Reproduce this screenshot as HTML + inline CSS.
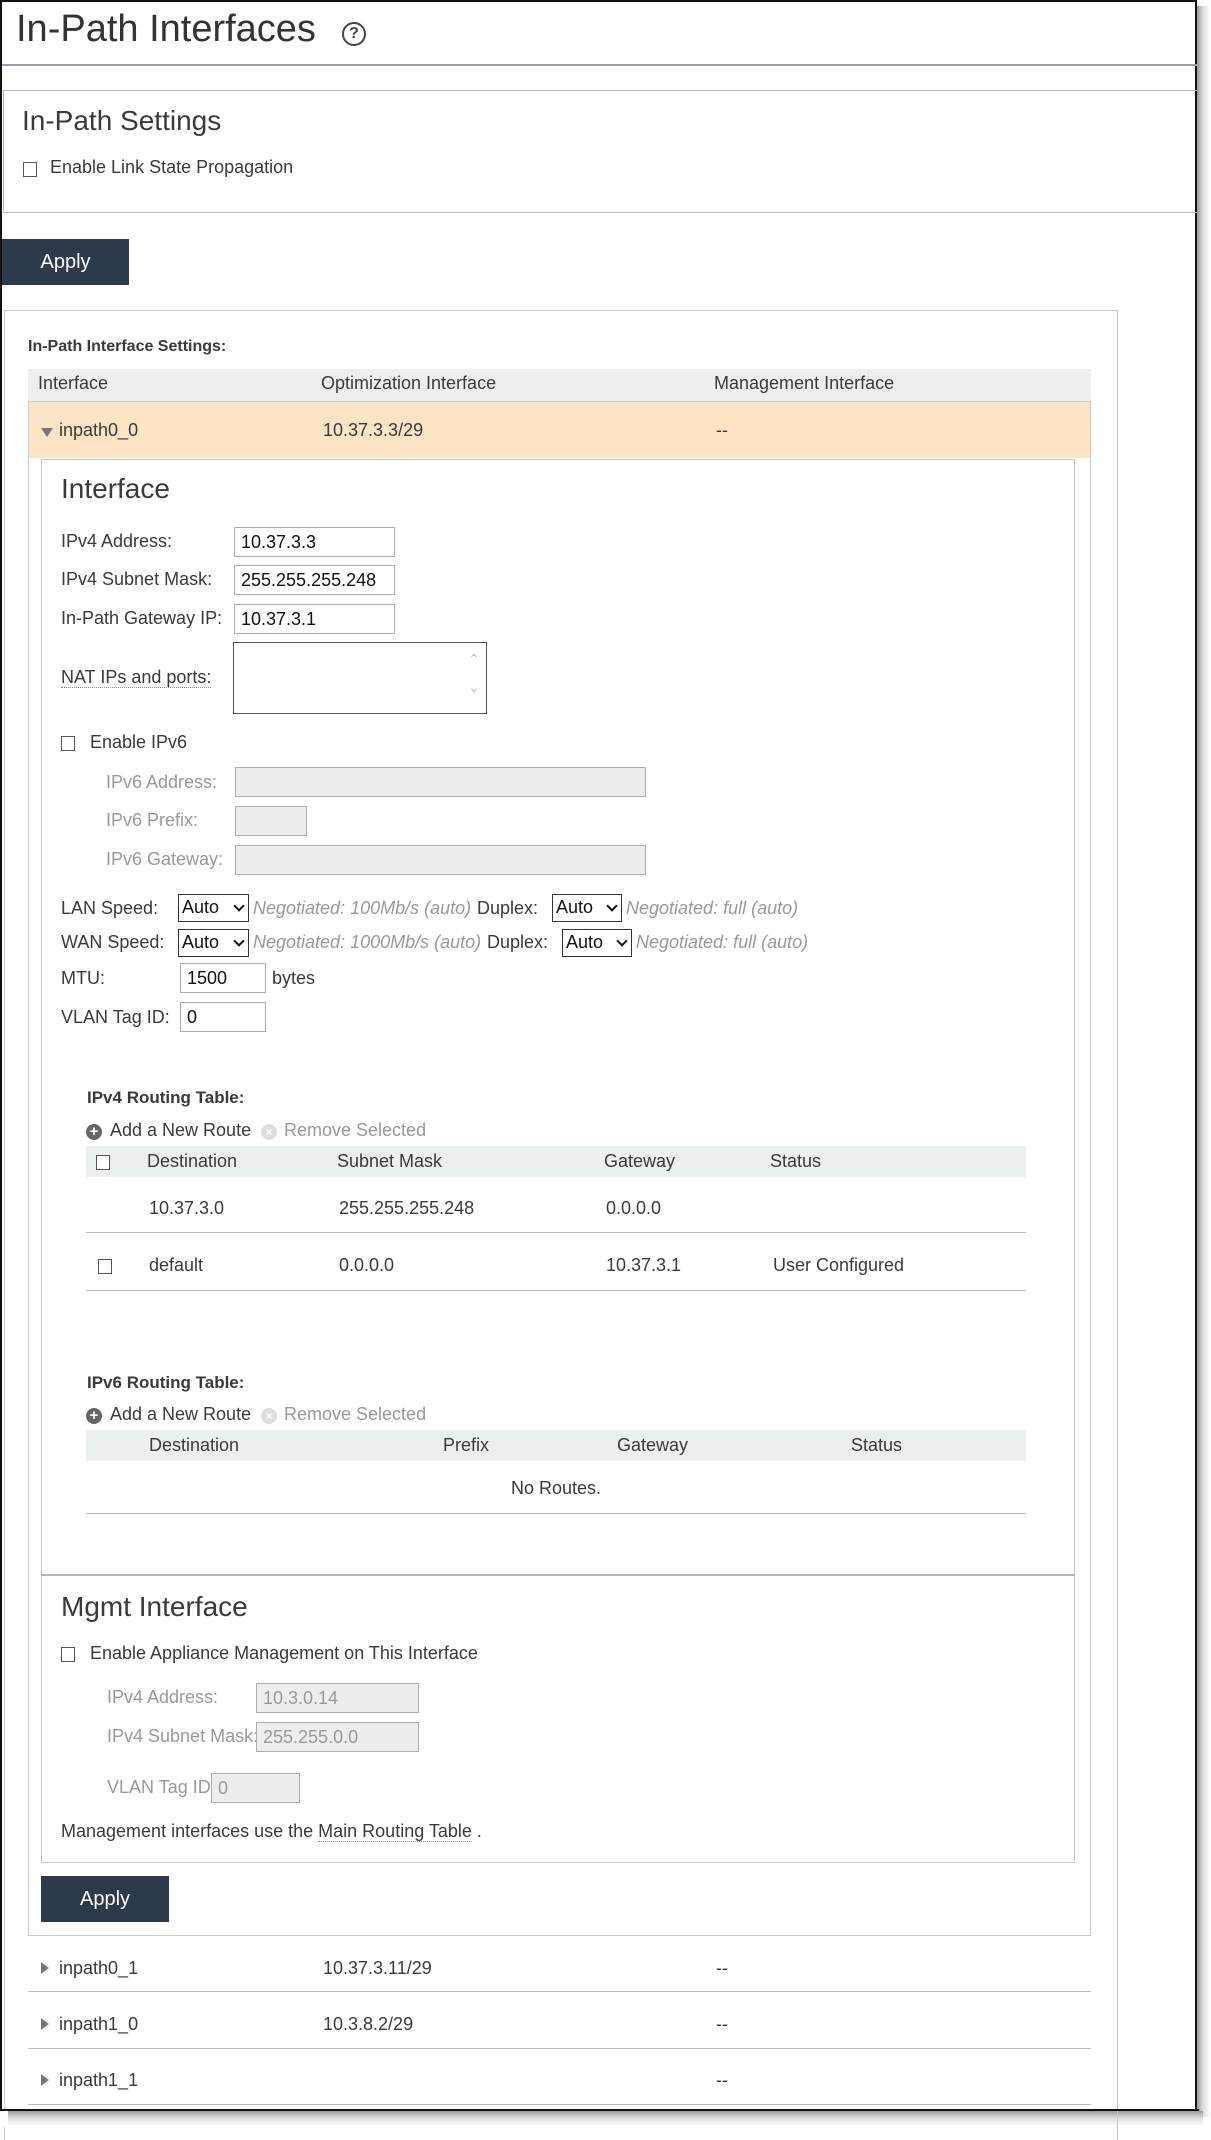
<!DOCTYPE html>
<html><head><meta charset="utf-8"><style>
*{margin:0;padding:0;box-sizing:border-box}
body{width:1211px;height:2127px;background:#fff;position:relative;font-family:"Liberation Sans",sans-serif;color:#3a3a3a;font-size:18px;overflow:hidden}
.a{position:absolute;white-space:nowrap;margin-top:-1px}
.l{position:absolute;background:#b5bcc2}
.inp{position:absolute;border:1px solid #a9aeb3;background:#fff;font-size:18px;padding-left:6px;line-height:28px;color:#111}
.dis{background:#eceeee;color:#999}
.btn{position:absolute;background:#2c3a4b;color:#fff;font-size:20px;text-align:center}
.cb{position:absolute;width:14px;height:15px;border:1.5px solid #555;background:#fff}
.sel{position:absolute;border:1.5px solid #333;height:28px;font-size:18px;line-height:24px;padding-left:3px;color:#111}
.sel:after{content:"";position:absolute;right:5px;top:7px;width:6px;height:6px;border-right:2px solid #111;border-bottom:2px solid #111;transform:rotate(45deg)}
.neg{color:#999;font-style:italic}
.g{color:#999}
.b{font-weight:bold}
.tri{position:absolute;width:0;height:0}
</style></head><body>
<div style="position:absolute;left:0;top:0;width:1197px;height:2111px;border:2px solid #111"></div>
<div style="position:absolute;left:1197px;top:6px;width:12px;height:2111px;background:linear-gradient(90deg,#999,#ddd,#f6f6f6)"></div>
<div style="position:absolute;left:8px;top:2111px;width:1195px;height:14px;background:linear-gradient(180deg,#999,#ddd,#fafafa)"></div>

<div class="a" style="left:16px;top:9px;font-size:38px;color:#333">In-Path Interfaces</div>
<div class="a" style="left:342px;top:22px;width:24px;height:24px;border:2.5px solid #444;border-radius:50%;font-size:16px;text-align:center;line-height:19px;font-weight:bold;color:#444;margin-top:0">?</div>
<div class="l" style="left:2px;top:64px;width:1195px;height:2px;background:#9aa1a8"></div>
<div class="l" style="left:2px;top:90px;width:1195px;height:1px"></div>
<div class="l" style="left:3px;top:91px;width:1px;height:122px"></div>
<div class="a" style="left:22px;top:106px;font-size:28px">In-Path Settings</div>
<div class="cb" style="left:23px;top:162px"></div>
<div class="a" style="left:50px;top:158px">Enable Link State Propagation</div>
<div class="l" style="left:3px;top:212px;width:1194px;height:1px"></div>
<div class="btn" style="left:2px;top:239px;width:127px;height:46px;line-height:46px">Apply</div>

<div style="position:absolute;left:4px;top:310px;width:1114px;height:1830px;border:1px solid #c2c7cc;border-bottom:none"></div>
<div class="a b" style="left:28px;top:339px;font-size:16px">In-Path Interface Settings:</div>
<div style="position:absolute;left:28px;top:369px;width:1063px;height:33px;background:#eceff0;border-bottom:1px solid #c8cdd1"></div>
<div class="a" style="left:38px;top:374px">Interface</div>
<div class="a" style="left:321px;top:374px">Optimization Interface</div>
<div class="a" style="left:714px;top:374px">Management Interface</div>
<div style="position:absolute;left:28px;top:402px;width:1063px;height:56px;background:#fde4c4;border-left:1px solid #c8cdd1;border-right:1px solid #c8cdd1"></div>
<div class="tri" style="left:41px;top:428px;border-left:6px solid transparent;border-right:6px solid transparent;border-top:9px solid #777"></div>
<div class="a" style="left:59px;top:421px">inpath0_0</div>
<div class="a" style="left:323px;top:421px">10.37.3.3/29</div>
<div class="a" style="left:716px;top:421px">--</div>
<div style="position:absolute;left:28px;top:458px;width:1063px;height:1478px;border:1px solid #c8cdd1;border-top:none"></div>
<div style="position:absolute;left:41px;top:459px;width:1034px;height:1404px;border:1px solid #c2c7cc"></div>

<div class="a" style="left:61px;top:474px;font-size:28px">Interface</div>
<div class="a" style="left:61px;top:532px">IPv4 Address:</div>
<div class="inp" style="left:234px;top:527px;width:161px;height:30px">10.37.3.3</div>
<div class="a" style="left:61px;top:570px">IPv4 Subnet Mask:</div>
<div class="inp" style="left:234px;top:565px;width:161px;height:30px">255.255.255.248</div>
<div class="a" style="left:61px;top:609px">In-Path Gateway IP:</div>
<div class="inp" style="left:234px;top:604px;width:161px;height:30px">10.37.3.1</div>
<div class="a" style="left:61px;top:668px;border-bottom:1px dotted #888;line-height:20px">NAT IPs and ports:</div>
<div style="position:absolute;left:233px;top:642px;width:254px;height:72px;border:1.5px solid #555"></div>
<div class="a" style="left:468px;top:652px;color:#bbb;font-size:14px">&#8963;</div>
<div class="a" style="left:468px;top:680px;color:#bbb;font-size:14px">&#8964;</div>
<div class="cb" style="left:61px;top:736px"></div>
<div class="a" style="left:90px;top:733px">Enable IPv6</div>
<div class="a g" style="left:106px;top:773px">IPv6 Address:</div>
<div class="inp dis" style="left:235px;top:767px;width:411px;height:30px"></div>
<div class="a g" style="left:106px;top:811px">IPv6 Prefix:</div>
<div class="inp dis" style="left:235px;top:806px;width:72px;height:30px"></div>
<div class="a g" style="left:106px;top:850px">IPv6 Gateway:</div>
<div class="inp dis" style="left:235px;top:845px;width:411px;height:30px"></div>

<div class="a" style="left:61px;top:899px">LAN Speed:</div>
<div class="sel" style="left:178px;top:894px;width:71px">Auto</div>
<div class="a neg" style="left:253px;top:899px">Negotiated: 100Mb/s (auto)</div>
<div class="a" style="left:477px;top:899px">Duplex:</div>
<div class="sel" style="left:552px;top:894px;width:70px">Auto</div>
<div class="a neg" style="left:626px;top:899px">Negotiated: full (auto)</div>
<div class="a" style="left:61px;top:933px">WAN Speed:</div>
<div class="sel" style="left:178px;top:929px;width:71px">Auto</div>
<div class="a neg" style="left:253px;top:933px">Negotiated: 1000Mb/s (auto)</div>
<div class="a" style="left:487px;top:933px">Duplex:</div>
<div class="sel" style="left:562px;top:929px;width:70px">Auto</div>
<div class="a neg" style="left:636px;top:933px">Negotiated: full (auto)</div>
<div class="a" style="left:61px;top:969px">MTU:</div>
<div class="inp" style="left:180px;top:963px;width:86px;height:30px">1500</div>
<div class="a" style="left:272px;top:969px">bytes</div>
<div class="a" style="left:61px;top:1008px">VLAN Tag ID:</div>
<div class="inp" style="left:180px;top:1002px;width:86px;height:30px">0</div>

<div class="a b" style="left:87px;top:1089px;font-size:17px">IPv4 Routing Table:</div>
<div class="a" style="left:86px;top:1124px;width:16px;height:16px;border-radius:50%;background:#666;color:#fff;font-size:15px;line-height:16px;text-align:center;font-weight:bold;margin-top:0">+</div>
<div class="a" style="left:110px;top:1121px">Add a New Route</div>
<div class="a" style="left:261px;top:1124px;width:16px;height:16px;border-radius:50%;background:#ddd;color:#fff;font-size:12px;line-height:16px;text-align:center;font-weight:bold;margin-top:0">×</div>
<div class="a g" style="left:284px;top:1121px">Remove Selected</div>
<div style="position:absolute;left:86px;top:1146px;width:940px;height:31px;background:#eceff0"></div>
<div class="cb" style="left:96px;top:1155px"></div>
<div class="a" style="left:147px;top:1152px">Destination</div>
<div class="a" style="left:337px;top:1152px">Subnet Mask</div>
<div class="a" style="left:604px;top:1152px">Gateway</div>
<div class="a" style="left:770px;top:1152px">Status</div>
<div class="a" style="left:149px;top:1199px">10.37.3.0</div>
<div class="a" style="left:339px;top:1199px">255.255.255.248</div>
<div class="a" style="left:606px;top:1199px">0.0.0.0</div>
<div class="l" style="left:86px;top:1232px;width:940px;height:1px"></div>
<div class="cb" style="left:98px;top:1259px"></div>
<div class="a" style="left:149px;top:1256px">default</div>
<div class="a" style="left:339px;top:1256px">0.0.0.0</div>
<div class="a" style="left:606px;top:1256px">10.37.3.1</div>
<div class="a" style="left:773px;top:1256px">User Configured</div>
<div class="l" style="left:86px;top:1290px;width:940px;height:1px"></div>

<div class="a b" style="left:87px;top:1374px;font-size:17px">IPv6 Routing Table:</div>
<div class="a" style="left:86px;top:1408px;width:16px;height:16px;border-radius:50%;background:#666;color:#fff;font-size:15px;line-height:16px;text-align:center;font-weight:bold;margin-top:0">+</div>
<div class="a" style="left:110px;top:1405px">Add a New Route</div>
<div class="a" style="left:261px;top:1408px;width:16px;height:16px;border-radius:50%;background:#ddd;color:#fff;font-size:12px;line-height:16px;text-align:center;font-weight:bold;margin-top:0">×</div>
<div class="a g" style="left:284px;top:1405px">Remove Selected</div>
<div style="position:absolute;left:86px;top:1430px;width:940px;height:31px;background:#eceff0"></div>
<div class="a" style="left:149px;top:1436px">Destination</div>
<div class="a" style="left:443px;top:1436px">Prefix</div>
<div class="a" style="left:617px;top:1436px">Gateway</div>
<div class="a" style="left:851px;top:1436px">Status</div>
<div class="a" style="left:511px;top:1479px">No Routes.</div>
<div class="l" style="left:86px;top:1513px;width:940px;height:1px"></div>

<div class="l" style="left:41px;top:1574px;width:1034px;height:2px;background:#b0b6bc"></div>
<div class="a" style="left:61px;top:1592px;font-size:28px">Mgmt Interface</div>
<div class="cb" style="left:61px;top:1647px"></div>
<div class="a" style="left:90px;top:1644px">Enable Appliance Management on This Interface</div>
<div class="a g" style="left:107px;top:1688px">IPv4 Address:</div>
<div class="inp dis" style="left:256px;top:1683px;width:163px;height:30px">10.3.0.14</div>
<div class="a g" style="left:107px;top:1727px">IPv4 Subnet Mask:</div>
<div class="inp dis" style="left:256px;top:1722px;width:163px;height:30px">255.255.0.0</div>
<div class="a g" style="left:107px;top:1778px">VLAN Tag ID:</div>
<div class="inp dis" style="left:211px;top:1773px;width:89px;height:30px">0</div>
<div class="a" style="left:61px;top:1822px">Management interfaces use the <span style="border-bottom:1px dotted #888">Main Routing Table</span> .</div>
<div class="btn" style="left:41px;top:1876px;width:128px;height:46px;line-height:46px">Apply</div>

<div class="tri" style="left:41px;top:1962px;border-top:6px solid transparent;border-bottom:6px solid transparent;border-left:8px solid #777"></div>
<div class="a" style="left:59px;top:1959px">inpath0_1</div>
<div class="a" style="left:323px;top:1959px">10.37.3.11/29</div>
<div class="a" style="left:716px;top:1959px">--</div>
<div class="l" style="left:28px;top:1991px;width:1063px;height:1px"></div>
<div class="tri" style="left:41px;top:2018px;border-top:6px solid transparent;border-bottom:6px solid transparent;border-left:8px solid #777"></div>
<div class="a" style="left:59px;top:2015px">inpath1_0</div>
<div class="a" style="left:323px;top:2015px">10.3.8.2/29</div>
<div class="a" style="left:716px;top:2015px">--</div>
<div class="l" style="left:28px;top:2048px;width:1063px;height:1px"></div>
<div class="tri" style="left:41px;top:2074px;border-top:6px solid transparent;border-bottom:6px solid transparent;border-left:8px solid #777"></div>
<div class="a" style="left:59px;top:2071px">inpath1_1</div>
<div class="a" style="left:716px;top:2071px">--</div>
<div class="l" style="left:28px;top:2104px;width:1063px;height:1px"></div>
<div style="position:absolute;left:0;top:2109px;width:1199px;height:2px;background:#111"></div>
<div style="position:absolute;left:0;top:2111px;width:8px;height:16px;background:#fff"></div>
</body></html>
